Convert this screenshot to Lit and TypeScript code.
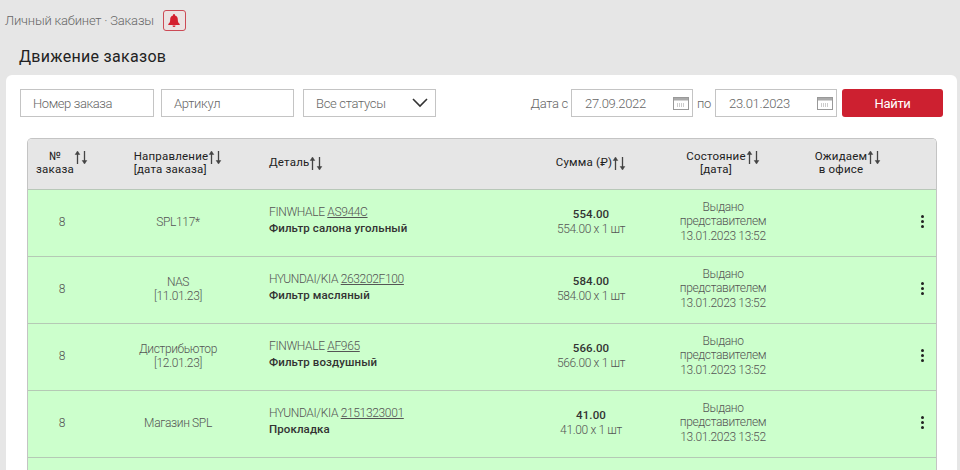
import { LitElement, html, css, svg } from "lit";
import { customElement } from "lit/decorators.js";

const rows = [
  { dir: ["SPL117*"], brand: "FINWHALE", code: "AS944C", name: "Фильтр салона угольный", sum: "554.00" , qty: "554.00 x 1 шт" },
  { dir: ["NAS", "[11.01.23]"], brand: "HYUNDAI/KIA", code: "263202F100", name: "Фильтр масляный", sum: "584.00", qty: "584.00 x 1 шт" },
  { dir: ["Дистрибьютор", "[12.01.23]"], brand: "FINWHALE", code: "AF965", name: "Фильтр воздушный", sum: "566.00", qty: "566.00 x 1 шт" },
  { dir: ["Магазин SPL"], brand: "HYUNDAI/KIA", code: "2151323001", name: "Прокладка", sum: "41.00", qty: "41.00 x 1 шт" },
];

const sort = html`<svg class="sort" width="14" height="15" viewBox="0 0 14 15" fill="none" stroke="#444" stroke-width="1.3">
  <path d="M3.500 14V3"/><path d="M1.200 4.500 3.500 1 5.800 4.500z" fill="#444" stroke-width="0.5"/>
  <path d="M10.500 1v10"/><path d="M8.200 10.500 10.500 14 12.800 10.500z" fill="#444" stroke-width="0.5"/>
</svg>`;

const cal = svg`<svg class="cal" width="16" height="13" viewBox="0 0 16 13" fill="none">
  <rect x="0.500" y="0.500" width="15" height="12" fill="#fff" stroke="#999"/>
  <rect x="1" y="1" width="14" height="2.500" fill="#aaa"/>
  <path d="M4 7h8M4 9h8" stroke="#999" stroke-dasharray="1 1"/>
</svg>`;

@customElement("app-root")
export class AppRoot extends LitElement {
  static styles = css`
    :host { display: block; width: 960px; height: 470px; overflow: hidden; background: #e6e6e6; font-family: Roboto, "Liberation Sans", sans-serif; font-weight: 300; color: #555; box-sizing: border-box; }
    .crumbs { display: flex; align-items: center; gap: 9px; height: 21px; padding: 10px 0 0 5px; font-size: 13px; letter-spacing: -0.2px; color: #666; }
    .bell { width: 23px; height: 21px; box-sizing: border-box; border: 1px solid #cc4a55; border-radius: 3px; display: flex; align-items: center; justify-content: center; background: #ebe3e3; }
    h1 { margin: 0; padding: 16px 0 0 19px; height: 28px; font-size: 16px; line-height: 20px; font-weight: 400; color: #222; letter-spacing: 0.3px; }
    .card { background: #fff; border-radius: 6px 6px 0 0; margin: 0 3px 0 6px; height: 400px; padding: 14px 14px 0 14px; box-sizing: border-box; }
    .filters { display: flex; align-items: center; height: 28px; font-size: 13px; letter-spacing: -0.3px; }
    .inp { box-sizing: border-box; height: 28px; border: 1px solid #c4c4c4; display: flex; align-items: center; padding-left: 12px; color: #666; }
    .w1 { width: 134px; margin-right: 7px; letter-spacing: -0.4px; }
    .w2 { width: 133px; margin-right: 9px; }
    .w3 { width: 133px; position: relative; justify-content: space-between; padding-right: 7px; }
    .spacer { flex: 1; }
    .lbl { color: #666; margin-right: 3px; }
    .date { width: 122px; justify-content: space-between; padding-left: 13px; padding-right: 3px; }
    .po { width: 22px; text-align: center; color: #666; }
    .btn { width: 101px; height: 28px; margin-left: 5px; background: #cd2030; color: #fff; border-radius: 3px; display: flex; align-items: center; justify-content: center; font-weight: 400; font-size: 13px; letter-spacing: -0.3px; }
    .table { margin: 21px 6px 0 7px; border: 1px solid #c4c4c4; border-radius: 5px 5px 0 0; border-bottom: 0; }
    .row { display: grid; grid-template-columns: 68px 164px 264px 134px 130px 120px 28px; }
    .head { height: 50px; background: #e6e6e6; border-radius: 4px 4px 0 0; border-bottom: 1px solid #b8c8b8; font-size: 11.5px; line-height: 13px; font-weight: 400; color: #222; letter-spacing: 0.2px; }
    .head > div { display: flex; align-items: flex-start; justify-content: center; gap: 0; padding-top: 11px; }
    .head .tx { text-align: center; }
    .head .sort { flex: none; }
    .head .left { justify-content: flex-start; padding-left: 9px; }
    .head .one { padding-top: 17px; }
    .head .txl { text-align: left; }
    .body { height: 66px; background: #ccffcc; border-bottom: 1px solid #b5c9b5; font-size: 12px; line-height: 14px; color: #555; letter-spacing: -0.35px; }
    .body > div { display: flex; flex-direction: column; justify-content: center; align-items: center; text-align: center; }
    .body .detail { align-items: flex-start; text-align: left; padding-left: 9px; padding-bottom: 7px; line-height: 16px; }
    .body .dircell, .body .num { padding-bottom: 2px; }
    .u { text-decoration: underline; }
    b { font-weight: 500; color: #333; letter-spacing: 0.1px; font-size: 11.5px; }
    .sumcell { padding-bottom: 3px; line-height: 15px; }
    .state { line-height: 14.5px; padding-bottom: 3px; }
    .dots { gap: 2px; padding-bottom: 3px; }
    .dots i { width: 3px; height: 3px; border-radius: 50%; background: #222; display: block; }
  `;
  render() {
    return html`
      <div class="crumbs"><span>Личный кабинет · Заказы</span>
        <span class="bell"><svg width="12" height="13" viewBox="0 0 12 13"><path fill="#d4202f" d="M6 0a1 1 0 0 1 1 1v.6C9 2 9.800 3.600 9.800 5.500c0 2.600.8 3.600 1.900 4.600v.9H.3v-.9c1.100-1 1.900-2 1.900-4.600C2.200 3.600 3 2 5 1.600V1a1 1 0 0 1 1-1zM4.500 11.500h3a1.500 1.500 0 0 1-3 0z"/></svg></span>
      </div>
      <h1>Движение заказов</h1>
      <div class="card">
        <div class="filters">
          <div class="inp w1">Номер заказа</div>
          <div class="inp w2">Артикул</div>
          <div class="inp w3">Все статусы
            <svg width="16" height="10" viewBox="0 0 16 10" fill="none" stroke="#333" stroke-width="1.6"><path d="M1 1l7 7 7-7"/></svg>
          </div>
          <div class="spacer"></div>
          <span class="lbl">Дата с</span>
          <div class="inp date">27.09.2022 ${cal}</div>
          <span class="po">по</span>
          <div class="inp date">23.01.2023 ${cal}</div>
          <div class="btn">Найти</div>
        </div>
        <div class="table">
          <div class="row head">
            <div><span class="tx">№<br />заказа</span>${sort}</div>
            <div><span class="tx txl">Направление<br />[дата заказа]</span>${sort}</div>
            <div class="left one"><span class="tx">Деталь</span>${sort}</div>
            <div class="one"><span class="tx">Сумма (₽)</span>${sort}</div>
            <div><span class="tx">Состояние<br />[дата]</span>${sort}</div>
            <div><span class="tx">Ожидаем<br />в офисе</span>${sort}</div>
            <div></div>
          </div>
          ${rows.map(r => html`
            <div class="row body">
              <div class="num">8</div>
              <div class="dircell">${r.dir.map(d => html`<span>${d}</span>`)}</div>
              <div class="detail"><span>${r.brand} <span class="u">${r.code}</span></span><b>${r.name}</b></div>
              <div class="sumcell"><b>${r.sum}</b><span>${r.qty}</span></div>
              <div class="state"><span>Выдано</span><span>представителем</span><span>13.01.2023 13:52</span></div>
              <div></div>
              <div class="dots"><i></i><i></i><i></i></div>
            </div>`)}
          <div class="row body"></div>
        </div>
      </div>
    `;
  }
}
